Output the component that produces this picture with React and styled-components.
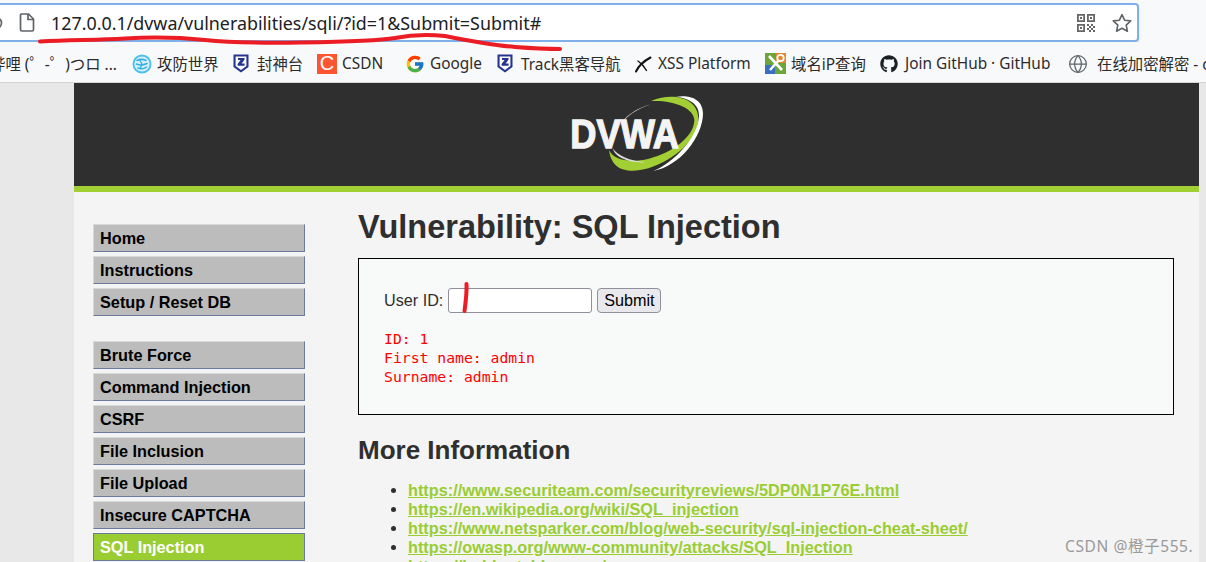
import React from "react";
import styled, { createGlobalStyle } from "styled-components";
import { FaGithub } from "react-icons/fa";
import { FcGoogle } from "react-icons/fc";
import { Globe } from "lucide-react";

const UI_FONT = `"Noto Sans", "Noto Sans CJK SC", sans-serif`;
const WEB_FONT = `"Liberation Sans", Arial, sans-serif`;

const GlobalStyle = createGlobalStyle`
  html, body {
    margin: 0;
    padding: 0;
    height: 562px;
    overflow: hidden;
    background: #e8e8e8;
  }
`;

const Screen = styled.div`
  position: relative;
  width: 1206px;
  height: 562px;
  overflow: hidden;
`;

// BROWSER CHROME
const Toolbar = styled.div`
  height: 42px;
  box-sizing: border-box;
  padding-top: 3px;
  background: #f8f9fb;
`;

const AddressBar = styled.div`
  width: 1152px;
  height: 39px;
  margin-left: -13px;
  box-sizing: border-box;
  display: flex;
  align-items: center;
  padding-right: 5px;
  background: #fff;
  border: 2px solid #7fb0ea;
  border-radius: 4px;
  box-shadow: 0 1px 2px rgba(0, 0, 0, 0.15);
`;

const ReloadStub = styled.svg`
  flex-shrink: 0;
  margin-right: 16px;
`;

const UrlText = styled.span`
  flex: 1;
  margin-left: 16px;
  font: 17.87px ${UI_FONT};
  color: #202124;
  white-space: nowrap;
`;

const BarIcons = styled.div`
  display: flex;
  align-items: center;
  gap: 16px;
`;

const Bookmarks = styled.div`
  height: 41px;
  box-sizing: border-box;
  display: flex;
  align-items: center;
  padding-top: 3px;
  margin-left: -10px;
  background: #f8f9fb;
  border-bottom: 1px solid #d6d6d6;
  white-space: nowrap;
  width: 1260px;
`;

const Bookmark = styled.div`
  width: ${(p) => p.$width}px;
  display: flex;
  align-items: center;
  gap: ${(p) => p.$gap || 5}px;
  font: 15.4px ${UI_FONT};
  color: #2b2b2b;
  flex-shrink: 0;
`;

const CsdnIcon = styled.span`
  width: 20px;
  height: 20px;
  display: flex;
  align-items: center;
  justify-content: center;
  background: #fc5531;
  color: #fff;
  font: 20px ${WEB_FONT};
`;

// DVWA PAGE
const Page = styled.div`
  width: 1125px;
  height: 480px;
  margin-left: 74px;
  background: #f4f4f4;
  font-family: ${WEB_FONT};
`;

const Header = styled.header`
  height: 103px;
  box-sizing: border-box;
  display: flex;
  justify-content: center;
  padding-top: 2px;
  background: #2f2f2f;
`;

const GreenRule = styled.div`
  height: 6px;
  background: #a2cf33;
`;

const Content = styled.div`
  display: flex;
  padding-left: 19px;
  gap: 53px;
`;

const Sidebar = styled.nav`
  width: 212px;
  flex-shrink: 0;
  padding-top: 32px;
  display: flex;
  flex-direction: column;
  gap: 25px;
`;

const MenuGroup = styled.div`
  display: flex;
  flex-direction: column;
  gap: 4px;
`;

const MenuItem = styled.div`
  height: 28px;
  box-sizing: border-box;
  padding: 0 0 0 6px;
  display: flex;
  align-items: center;
  font-size: 16.25px;
  font-weight: bold;
  color: ${(p) => (p.$active ? "#fff" : "#000")};
  background: ${(p) => (p.$active ? "#9acd32" : "#bcbcbc")};
  border: 1px solid #d9d9d9;
  border-right-color: #6a7b9b;
  border-bottom-color: #6a7b9b;
  ${(p) => p.$active && "border-color: #6a7b9b;"}
`;

const Main = styled.main`
  width: 816px;
  color: #2f2f2f;
`;

const Title = styled.h1`
  margin: 17px 0 13px;
  font-size: 32.5px;
  line-height: 36px;
  font-weight: bold;
`;

const VulnBox = styled.div`
  height: 157px;
  box-sizing: border-box;
  padding: 29px 25px 0;
  background: #f8f9f9;
  border: 1px solid #000;
`;

const FormRow = styled.div`
  display: flex;
  align-items: center;
  font-size: 16.2px;
  color: #2f2f2f;
`;

const IdInput = styled.input`
  width: 144px;
  height: 25px;
  box-sizing: border-box;
  margin-left: 5px;
  background: #fff;
  border: 1px solid #8f8f9d;
  border-radius: 3px;
`;

const SubmitButton = styled.button`
  width: 64px;
  height: 25px;
  box-sizing: border-box;
  margin-left: 5px;
  padding: 0;
  font: 16.2px ${WEB_FONT};
  color: #000;
  background: #e9e9ed;
  border: 1px solid #8f8f9d;
  border-radius: 4px;
`;

const Output = styled.pre`
  margin: 16px 0 0;
  font: 14.75px/19px "DejaVu Sans Mono", "Liberation Mono", monospace;
  color: #f00;
`;

const SubTitle = styled.h2`
  margin: 19px 0 15px;
  font-size: 26px;
  line-height: 32px;
  font-weight: bold;
`;

const LinkList = styled.ul`
  margin: 0;
  padding-left: 50px;
  font-size: 16.27px;
  line-height: 19px;
`;

const LinkItem = styled.li``;

const MoreLink = styled.a`
  color: #9acd32;
  font-weight: bold;
  text-decoration: underline;
`;

// OVERLAYS
const Scribbles = styled.svg`
  position: absolute;
  left: 0;
  top: 0;
  pointer-events: none;
`;

const Watermark = styled.div`
  position: absolute;
  left: 1065px;
  top: 534px;
  font: 15.5px ${UI_FONT};
  letter-spacing: 0.6px;
  color: #9a9a9a;
  white-space: nowrap;
`;

const PageIcon = () => (
  <svg width="16" height="19" viewBox="0 0 16 19" fill="none" stroke="#5f6368" strokeWidth="1.7">
    <path d="M2.5 1h7l5 5v10.5a1.5 1.5 0 0 1-1.5 1.5H3a1.5 1.5 0 0 1-1.5-1.5V2A1 1 0 0 1 2.5 1z" />
    <path d="M9 1v5.5h5.5" />
  </svg>
);

const QrIcon = () => (
  <svg width="20" height="20" viewBox="0 0 20 20" fill="#666">
    <path d="M1 1h8v8H1zM2.8 2.8v4.4h4.4V2.8zM11 1h8v8h-8zm1.8 1.8v4.4h4.4V2.8zM1 11h8v8H1zm1.8 1.8v4.4h4.4v-4.4z" fillRule="evenodd" />
    <path d="M4 4h2v2H4zM14 4h2v2h-2zM4 14h2v2H4zM11 11h2v2h-2zM15 11h2v2h-2zM13 13h2v2h-2zM17 13h2v2h-2zM11 15h2v2h-2zM15 15h2v2h-2zM13 17h2v2h-2zM17 17h2v2h-2z" />
  </svg>
);

const StarIcon = () => (
  <svg width="20" height="20" viewBox="0 0 20 20" fill="none" stroke="#5f6368" strokeWidth="1.6" strokeLinejoin="round">
    <path d="M10 1.6l2.6 5.6 6.1.7-4.5 4.2 1.2 6.1L10 15.2l-5.4 3 1.2-6.1-4.5-4.2 6.1-.7z" />
  </svg>
);

const SwirlIcon = () => (
  <svg width="20" height="20" viewBox="0 0 20 20" fill="none">
    <circle cx="10" cy="10" r="9.5" fill="#4cc0ec" />
    <circle cx="10" cy="10" r="7.6" fill="#d7f1fa" />
    <path d="M5 6.5c3-1.5 6-1.5 9 0M4.5 10c3 1.5 7 1 10.5-.5M6 14c2.5 1 6 1 8.5-1" stroke="#36aee0" strokeWidth="1.6" strokeLinecap="round" />
    <path d="M7 5l3 5-2 5" stroke="#36aee0" strokeWidth="1.3" />
  </svg>
);

const ShieldIcon = () => (
  <svg width="16" height="19" viewBox="0 0 16 19">
    <path d="M0.5 0.5h15v12.5L8 18.5 0.5 13z" fill="#26348f" />
    <path d="M2.6 2.6h10.8v9.3L8 16l-5.4-4.1z" fill="#fff" />
    <path d="M5 4h6.5v1.8L8.6 9.5h3v2.2H4.6V10l3-4H5z" fill="#26348f" />
  </svg>
);

const XssIcon = () => (
  <svg width="18" height="18" viewBox="0 0 18 18" fill="none" stroke="#111" strokeLinecap="round">
    <path d="M16.5 2.5C10 6 5 10 2 16.5" strokeWidth="2" />
    <path d="M4 6c3 2 6.5 6 8.5 9.5" strokeWidth="1.4" />
  </svg>
);

const ToolsIcon = () => (
  <svg width="21" height="21" viewBox="0 0 21 21">
    <rect width="21" height="21" fill="#6aa63a" />
    <path d="M0 12h10v9H0z" fill="#3a6fc0" />
    <path d="M11 0h10v10H11z" fill="#e8862a" />
    <circle cx="15.5" cy="5" r="3.2" fill="none" stroke="#fff" strokeWidth="1.8" />
    <path d="M13.5 7.5L5 17M4 3l13 14" stroke="#fff" strokeWidth="2.6" />
  </svg>
);

const DvwaLogo = () => (
  <svg width="160" height="101" viewBox="48 0 480 303">
    <path d="M330 48C400 20 470 40 472 100c2 60-70 125-150 150-60 16-110 8-118-55 14 30 60 40 120 26 70-18 135-65 136-115C460 70 400 45 330 48z" fill="#a2cf33" />
    <path d="M405 35c40-6 80 5 81 50 0 70-70 160-150 173 60-22 135-100 138-165 2-35-30-54-69-58z" fill="#fff" />
    <path d="M330 58c-40 10-80 35-100 72 22-35 62-60 100-72zM215 190c6 25 45 45 100 42-50-4-85-20-100-42z" fill="#ddd" />
    <text
      x="88"
      y="188"
      fontFamily={WEB_FONT}
      fontWeight="bold"
      fontSize="123"
      fill="#f4f4f4"
      stroke="#f4f4f4"
      strokeWidth="4"
      textLength="326"
      lengthAdjust="spacingAndGlyphs"
    >
      DVWA
    </text>
  </svg>
);

const BOOKMARKS = [
  { label: "哔哩 (゜-゜)つロ ...", width: 142 },
  { label: "攻防世界", icon: <SwirlIcon />, width: 101 },
  { label: "封神台", icon: <ShieldIcon />, gap: 8, width: 84 },
  { label: "CSDN", icon: <CsdnIcon>C</CsdnIcon>, width: 88 },
  { label: "Google", icon: <FcGoogle size={20} />, width: 92 },
  { label: "Track黑客导航", icon: <ShieldIcon />, gap: 8, width: 137 },
  { label: "XSS Platform", icon: <XssIcon />, gap: 6, width: 131 },
  { label: "域名iP查询", icon: <ToolsIcon />, width: 115 },
  { label: "Join GitHub · GitHub", icon: <FaGithub size={18} color="#1b1f23" />, gap: 7, width: 188 },
  { label: "在线加密解密 - c", icon: <Globe size={20} color="#5f6368" strokeWidth={1.5} />, gap: 9, width: 190 },
];

const MENU = [
  ["Home", "Instructions", "Setup / Reset DB"],
  ["Brute Force", "Command Injection", "CSRF", "File Inclusion", "File Upload", "Insecure CAPTCHA", "SQL Injection"],
];

const LINKS = [
  "https://www.securiteam.com/securityreviews/5DP0N1P76E.html",
  "https://en.wikipedia.org/wiki/SQL_injection",
  "https://www.netsparker.com/blog/web-security/sql-injection-cheat-sheet/",
  "https://owasp.org/www-community/attacks/SQL_Injection",
  "https://bobby-tables.com/",
];

const App = () => {
  return (
    <Screen>
      <GlobalStyle />
      <Toolbar>
        <AddressBar>
          {/* reload button, only its right edge is in the frame */}
          <ReloadStub width="14" height="14" viewBox="0 0 14 14" fill="none" stroke="#5f6368" strokeWidth="1.7">
            <circle cx="7" cy="7" r="5.5" />
          </ReloadStub>
          <PageIcon />
          <UrlText>127.0.0.1/dvwa/vulnerabilities/sqli/?id=1&amp;Submit=Submit#</UrlText>
          <BarIcons>
            <QrIcon />
            <StarIcon />
          </BarIcons>
        </AddressBar>
      </Toolbar>
      <Bookmarks>
        {BOOKMARKS.map((b) => (
          <Bookmark key={b.label} $gap={b.gap} $width={b.width}>
            {b.icon}
            {b.label}
          </Bookmark>
        ))}
      </Bookmarks>
      <Page>
        <Header>
          <DvwaLogo />
        </Header>
        <GreenRule />
        <Content>
          <Sidebar>
            {MENU.map((group) => (
              <MenuGroup key={group[0]}>
                {group.map((item) => (
                  <MenuItem key={item} $active={item === "SQL Injection"}>
                    {item}
                  </MenuItem>
                ))}
              </MenuGroup>
            ))}
          </Sidebar>
          <Main>
            <Title>Vulnerability: SQL Injection</Title>
            <VulnBox>
              <FormRow>
                User ID:
                <IdInput readOnly />
                <SubmitButton>Submit</SubmitButton>
              </FormRow>
              <Output>{"ID: 1\nFirst name: admin\nSurname: admin"}</Output>
            </VulnBox>
            <SubTitle>More Information</SubTitle>
            <LinkList>
              {LINKS.map((href) => (
                <LinkItem key={href}>
                  <MoreLink href={href}>{href}</MoreLink>
                </LinkItem>
              ))}
            </LinkList>
          </Main>
        </Content>
      </Page>
      <Scribbles width="1206" height="562" viewBox="0 0 1206 562" fill="none" stroke="#ec1c24" strokeLinecap="round">
        <path
          d="M40 41.5C75 40 100 40 125 38.5C150 37 175 37 205 40C235 43 265 43 300 42.5C335 42 375 41.5 395 38C410 35 425 34 445 36C470 41 490 45 515 47C535 48.5 550 49 560 49"
          strokeWidth="4"
        />
        <path d="M466.5 284C467 293 465.5 303 464.5 311" strokeWidth="4" />
      </Scribbles>
      <Watermark>CSDN @橙子555.</Watermark>
    </Screen>
  );
};

export default App;
